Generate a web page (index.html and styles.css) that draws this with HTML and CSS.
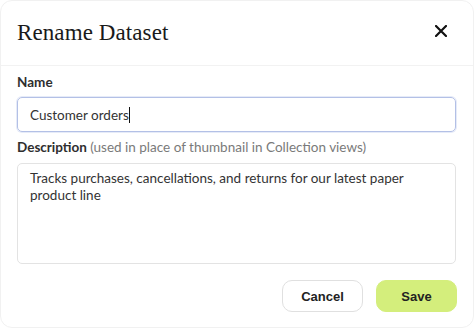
FILE: index.html
```html
<!DOCTYPE html>
<html>
<head>
<meta charset="utf-8">
<link rel="stylesheet" href="styles.css">
</head>
<body>
<div class="dialog">
  <header class="dialog-header">
    <h1 class="title">Rename Dataset</h1>
    <button class="close" aria-label="Close">
      <svg width="12" height="12" viewBox="0 0 12 12"><path d="M1 1L11 11M11 1L1 11" stroke="#111" stroke-width="2.2" stroke-linecap="round"/></svg>
    </button>
  </header>
  <div class="dialog-body">
    <label class="label">Name</label>
    <div class="input focused">Customer orders<span class="caret"></span></div>
    <label class="label">Description <span class="hint">(used in place of thumbnail in Collection views)</span></label>
    <div class="textarea">Tracks purchases, cancellations, and returns for our latest paper product line</div>
  </div>
  <footer class="dialog-footer">
    <button class="btn btn-cancel">Cancel</button>
    <button class="btn btn-save">Save</button>
  </footer>
</div>
</body>
</html>
```
FILE: styles.css
```css
html, body {
  margin: 0;
  padding: 0;
  background: #fff;
}
body {
  width: 474px;
  height: 328px;
  overflow: hidden;
  font-family: Lato, "Liberation Sans", sans-serif;
}
.dialog {
  box-sizing: border-box;
  width: 474px;
  height: 328px;
  border-radius: 12px;
  border: 1px solid #f1f1f1;
  background: #fff;
  display: flex;
  flex-direction: column;
}
.dialog-header {
  display: flex;
  align-items: center;
  justify-content: space-between;
  height: 64px;
  padding: 0 26px 0 16px;
  border-bottom: 1px solid #f2f2f2;
}
.title {
  margin: 0;
  font-family: "Liberation Serif", serif;
  font-weight: normal;
  font-size: 23px;
  color: #1a1a1a;
  letter-spacing: 0.1px;
  padding-top: 0;
}
.close {
  border: 0;
  background: none;
  padding: 0;
  width: 12px;
  height: 12px;
  display: flex;
  margin-top: -4px;
}
.dialog-body {
  padding: 7px 17px 0 16px;
  display: flex;
  flex-direction: column;
}
.label {
  font-size: 13.5px;
  font-weight: 700;
  color: #2e2e2e;
  line-height: 18px;
}
.hint {
  font-weight: 400;
  color: #7a7a7a;
}
.input {
  box-sizing: border-box;
  margin-top: 6px;
  height: 35px;
  border: 1px solid #b3c0e6;
  border-radius: 5px;
  box-shadow: 0 0 0 1px #e6ebf8;
  padding: 0 12px;
  display: flex;
  align-items: center;
  font-size: 13.5px;
  color: #333;
  margin-bottom: 6px;
}
.caret {
  display: inline-block;
  width: 1px;
  height: 16px;
  background: #111;
}
.textarea {
  box-sizing: border-box;
  margin-top: 7px;
  height: 101px;
  border: 1px solid #e3e3e3;
  border-radius: 5px;
  padding: 6px 12px;
  font-size: 13.5px;
  line-height: 17px;
  color: #333;
}
.dialog-footer {
  display: flex;
  justify-content: flex-end;
  gap: 13px;
  padding: 16px 16px 0 0;
}
.btn {
  width: 81px;
  height: 32px;
  border-radius: 10px;
  font-family: "Liberation Sans", Arial, sans-serif;
  font-weight: 700;
  font-size: 13px;
  color: #222;
  cursor: pointer;
}
.btn-cancel {
  background: #fff;
  border: 1px solid #e0e0e0;
}
.btn-save {
  background: #d4ee7c;
  border: 1px solid #d4ee7c;
}
```
